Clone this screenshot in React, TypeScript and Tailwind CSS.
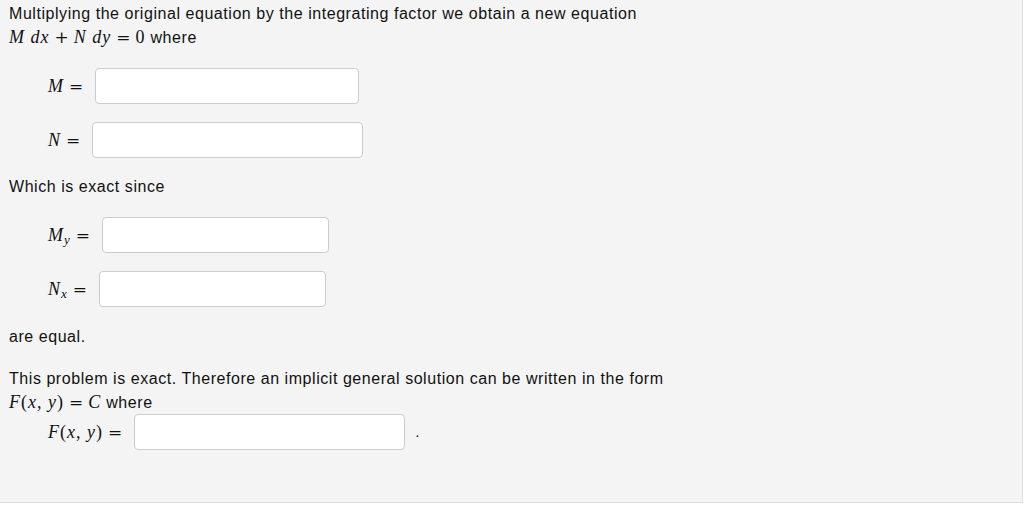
import React from "react";

const mathFont = "font-['Liberation_Serif',serif] text-[18px] leading-[18px] tracking-[1px]";

function Var({ children }: { children: React.ReactNode }) {
  return <span className="italic">{children}</span>;
}

// MathJax style operators are wider than Times ones, DejaVu Serif gets closer
function Op({ children }: { children: React.ReactNode }) {
  return (
    <span className="mx-[5px] font-['DejaVu_Serif',serif] text-[17px] tracking-normal not-italic">{children}</span>
  );
}

function AnswerRow({
  label,
  width,
  trailing,
  className = "",
}: {
  label: React.ReactNode;
  width: string;
  trailing?: React.ReactNode;
  className?: string;
}) {
  return (
    <div className={`-ml-[9px] flex items-center pl-[48px] ${className}`}>
      <span className={`${mathFont} whitespace-nowrap text-[#111]`}>{label}</span>
      <input
        type="text"
        className={`ml-[7px] h-[36px] ${width} rounded-[4px] border border-[#cccccc] bg-white px-2 text-[15px] outline-none`}
      />
      {trailing}
    </div>
  );
}

export default function App() {
  return (
    <div className="h-[505px] w-[1024px] bg-white">
      <div className="h-[503px] w-[1023px] border-r border-b border-[#dcdcdc] bg-[#f4f4f4] pl-[9px] pt-[2px] font-['Liberation_Sans',Arial,sans-serif] text-[16px] leading-[24px] tracking-[0.55px] text-[#111]">
        <p>Multiplying the original equation by the integrating factor we obtain a new equation</p>
        <p>
          <span className={mathFont}>
            <Var>M</Var> <Var>dx</Var>
            <Op>+</Op>
            <Var>N</Var> <Var>dy</Var>
            <Op>=</Op>0
          </span>{" "}
          where
        </p>

        <AnswerRow className="mt-[18px]" label={<><Var>M</Var><Op>=</Op></>} width="w-[264px]" />
        <AnswerRow className="mt-[18px]" label={<><Var>N</Var><Op>=</Op></>} width="w-[271px]" />

        <p className="mt-[17px]">Which is exact since</p>

        <AnswerRow
          className="mt-[18px]"
          label={
            <>
              <Var>M</Var>
              <sub className="text-[13px] italic">y</sub>
              <Op>=</Op>
            </>
          }
          width="w-[227px]"
        />
        <AnswerRow
          className="mt-[18px]"
          label={
            <>
              <Var>N</Var>
              <sub className="text-[13px] italic">x</sub>
              <Op>=</Op>
            </>
          }
          width="w-[227px]"
        />

        <p className="mt-[18px]">are equal.</p>
        <p className="mt-[18px]">This problem is exact. Therefore an implicit general solution can be written in the form</p>
        <p>
          <span className={mathFont}>
            <Var>F</Var>(<Var>x</Var>, <Var>y</Var>)<Op>=</Op>
            <Var>C</Var>
          </span>{" "}
          where
        </p>
        <AnswerRow
          className="-mt-px"
          label={
            <>
              <Var>F</Var>(<Var>x</Var>, <Var>y</Var>)<Op>=</Op>
            </>
          }
          width="w-[271px]"
          trailing={<span className="ml-[10px] text-[15px]">.</span>}
        />
      </div>
    </div>
  );
}
